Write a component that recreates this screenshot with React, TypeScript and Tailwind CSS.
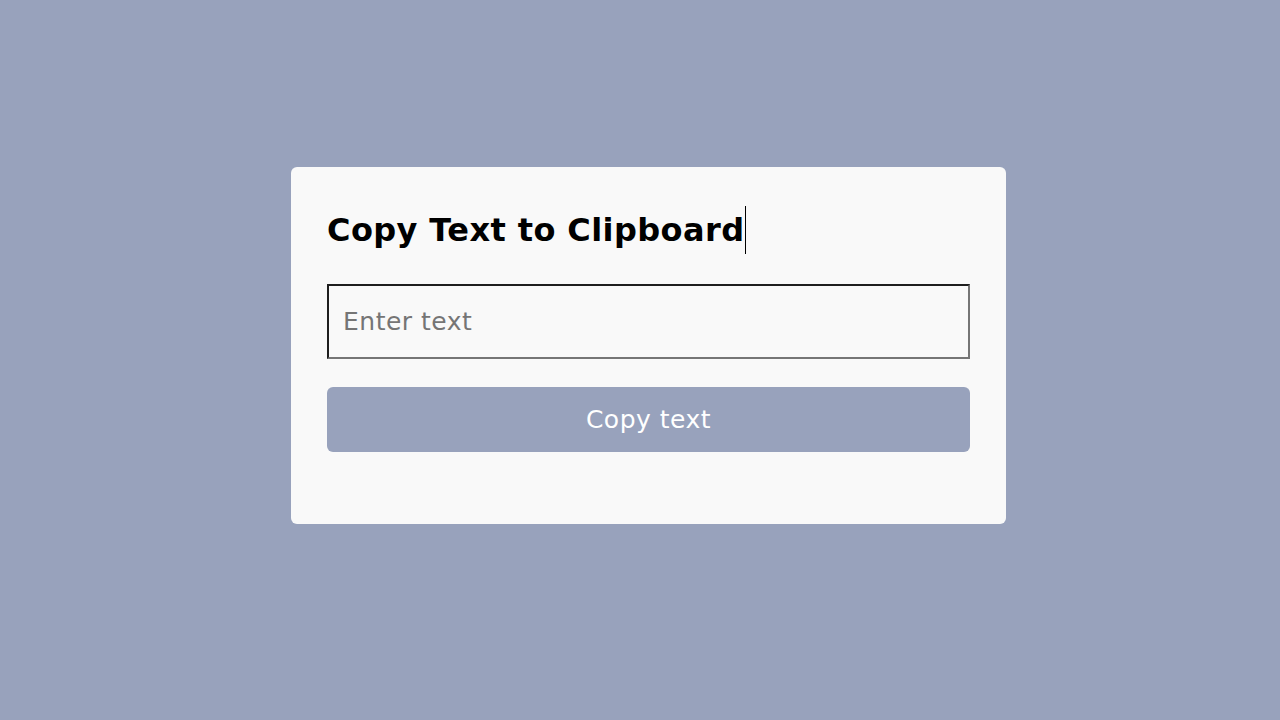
import React from "react";

export default function App() {
  return (
    <div className="w-[1280px] h-[720px] bg-[#98a2bc] flex items-start pl-[291px] pt-[167px]" style={{ fontFamily: "'DejaVu Sans', 'Noto Sans', sans-serif" }}>
      <div className="w-[715px] h-[357px] bg-[#f9f9f9] rounded-[6px] px-[36px] pt-[37px] flex flex-col">
        <div className="flex items-center h-[52px]">
          <h1 className="text-[32px] font-bold text-black leading-[52px] tracking-[0.4px]">Copy Text to Clipboard</h1>
          <div className="w-px h-[48px] bg-black ml-px" />
        </div>
        <div className="mt-[28px] h-[75px] border-2 border-t-[#1e1e1e] border-l-[#1e1e1e] border-b-[#767676] border-r-[#767676] flex items-center px-[14px]">
          <input
            className="w-full bg-transparent outline-none text-[25px] tracking-[0.5px] text-black placeholder:text-[#757575]"
            placeholder="Enter text"
          />
        </div>
        <button className="mt-[28px] h-[65px] w-full rounded-[6px] bg-[#98a2bc] text-white text-[25px] tracking-[0.5px] flex items-center justify-center">
          Copy text
        </button>
      </div>
    </div>
  );
}
